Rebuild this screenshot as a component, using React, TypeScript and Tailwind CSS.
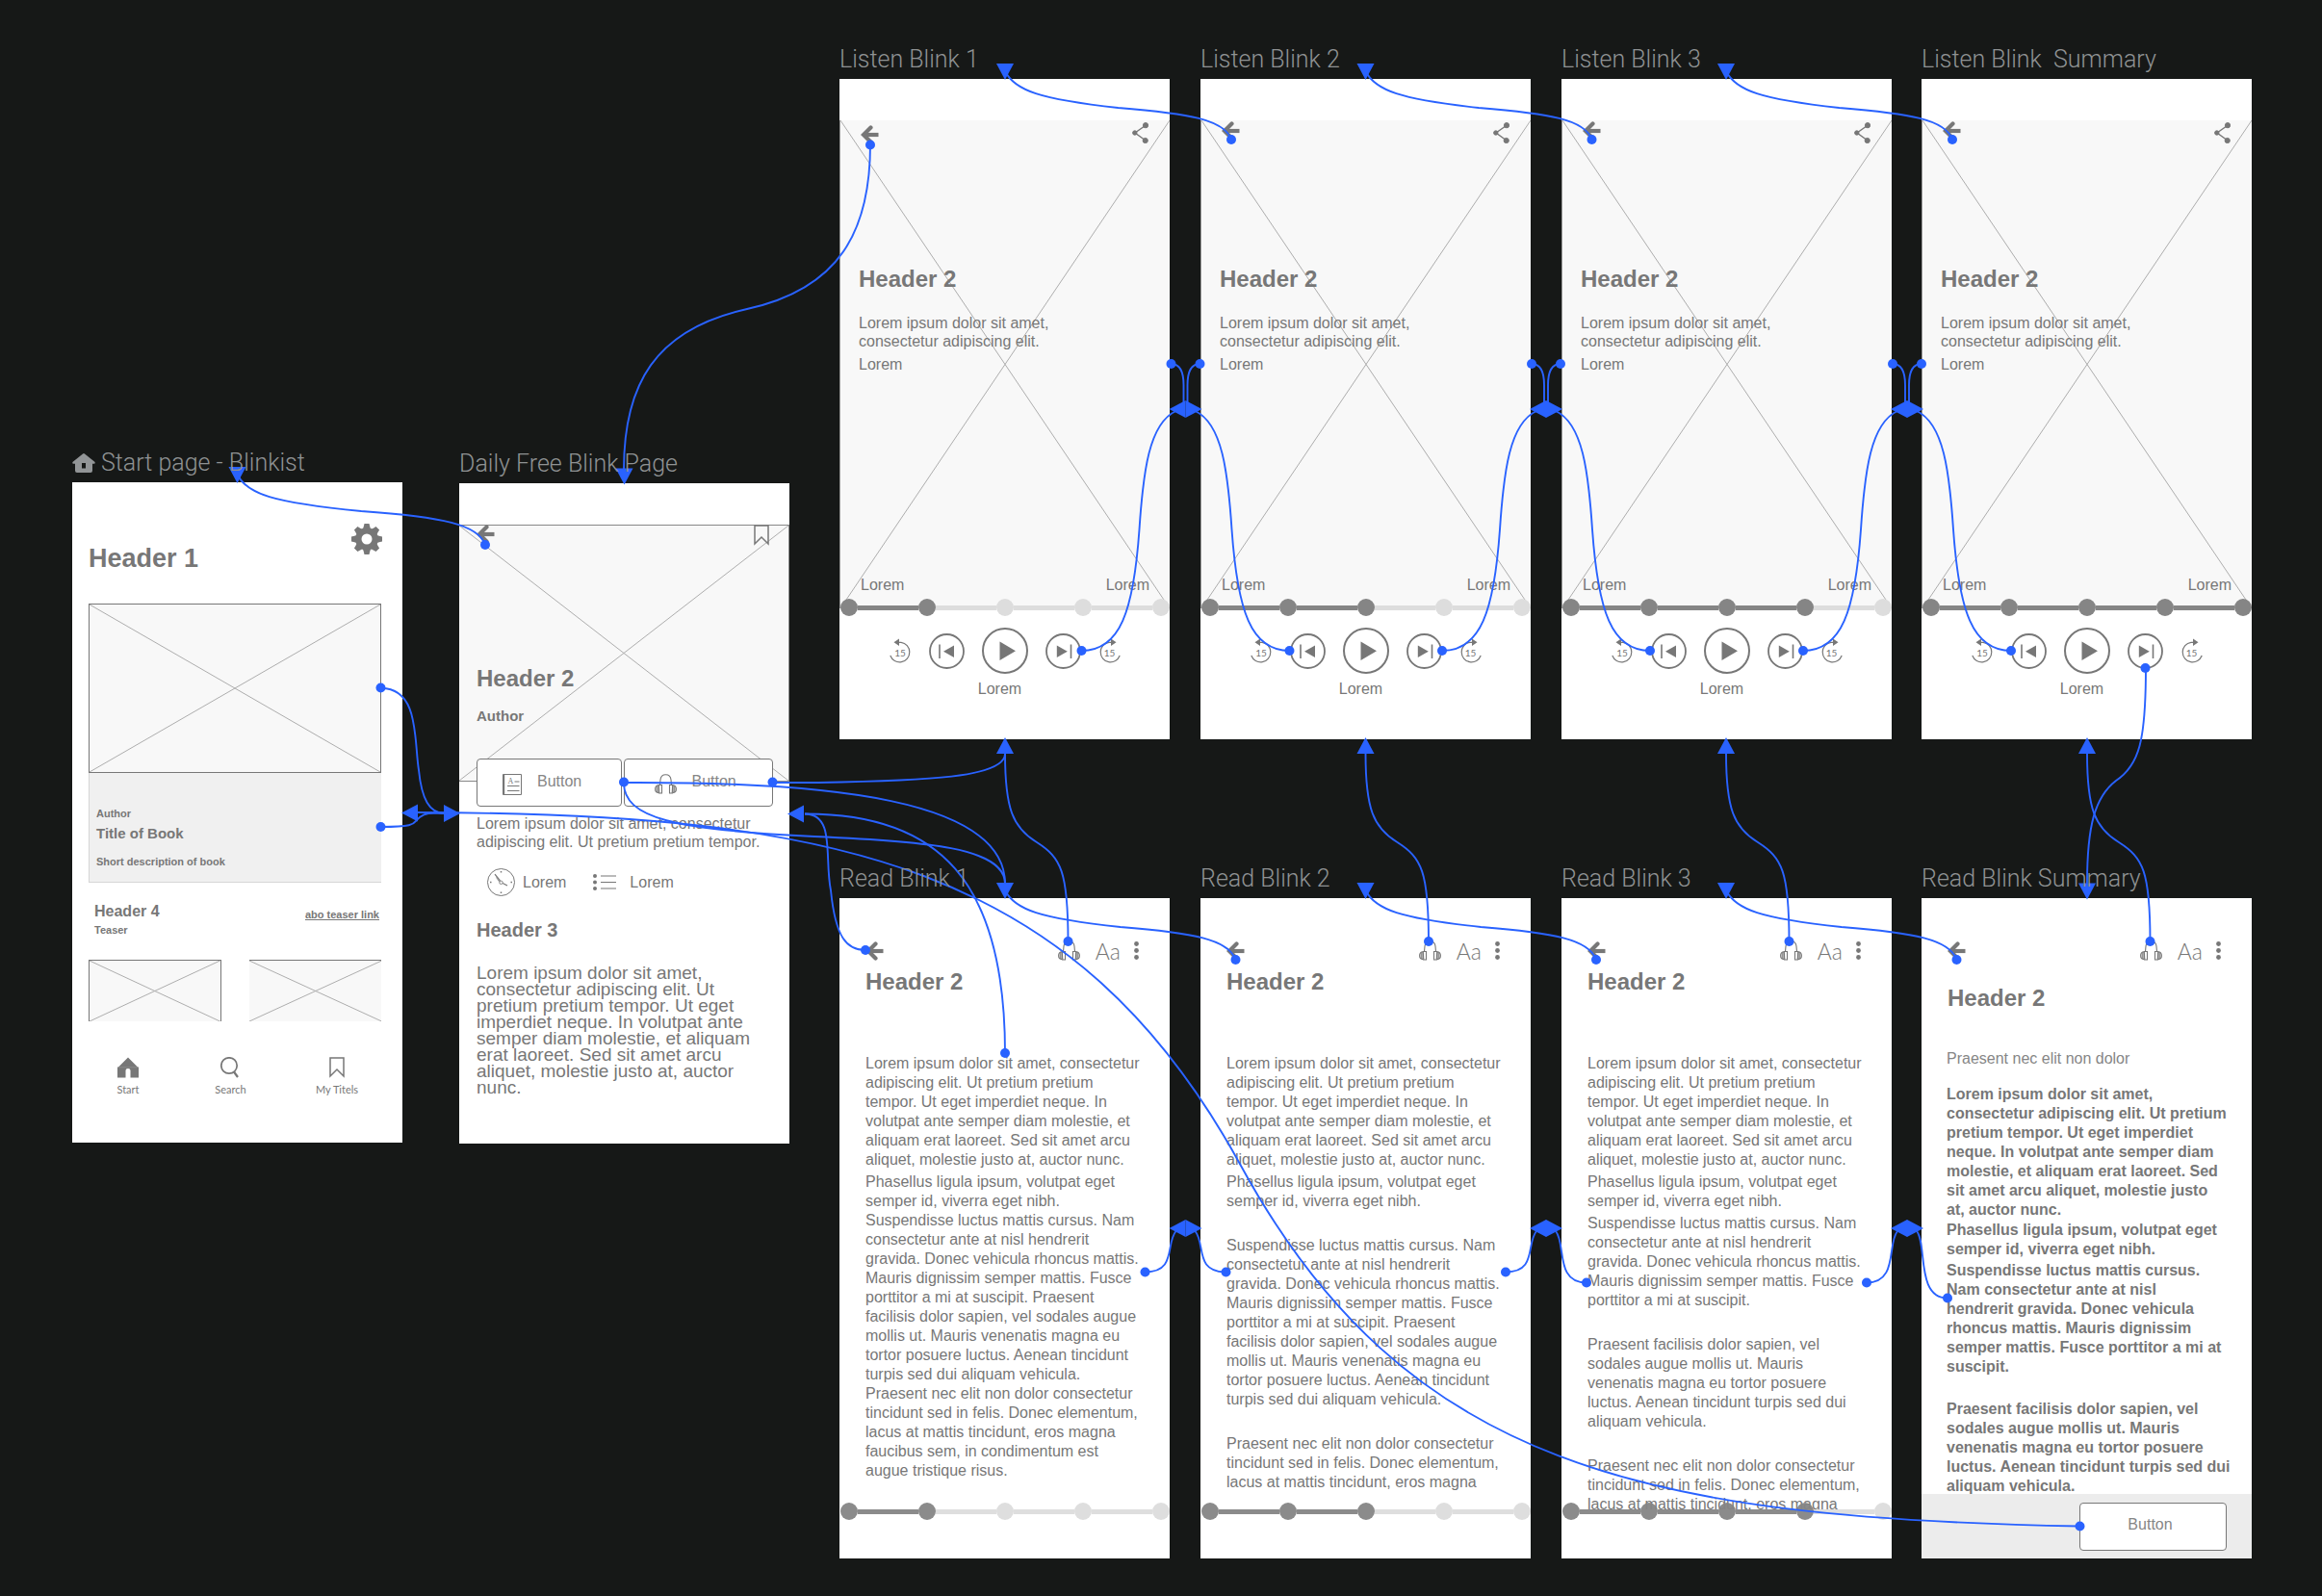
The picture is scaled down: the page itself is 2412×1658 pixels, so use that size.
import React from "react";

/* ---------- shared text ---------- */

const LOREM = `Lorem ipsum dolor sit amet, consectetur
adipiscing elit. Ut pretium pretium
tempor. Ut eget imperdiet neque. In
volutpat ante semper diam molestie, et
aliquam erat laoreet. Sed sit amet arcu
aliquet, molestie justo at, auctor nunc.`;

const PHASELLUS = `Phasellus ligula ipsum, volutpat eget
semper id, viverra eget nibh.`;

const SUSPENDISSE_LONG = `Suspendisse luctus mattis cursus. Nam
consectetur ante at nisl hendrerit
gravida. Donec vehicula rhoncus mattis.
Mauris dignissim semper mattis. Fusce
porttitor a mi at suscipit. Praesent
facilisis dolor sapien, vel sodales augue
mollis ut. Mauris venenatis magna eu
tortor posuere luctus. Aenean tincidunt
turpis sed dui aliquam vehicula.`;

const SUSPENDISSE_SHORT = `Suspendisse luctus mattis cursus. Nam
consectetur ante at nisl hendrerit
gravida. Donec vehicula rhoncus mattis.
Mauris dignissim semper mattis. Fusce
porttitor a mi at suscipit.`;

const FACILISIS = `Praesent facilisis dolor sapien, vel
sodales augue mollis ut. Mauris
venenatis magna eu tortor posuere
luctus. Aenean tincidunt turpis sed dui
aliquam vehicula.`;

const PRAESENT = `Praesent nec elit non dolor consectetur
tincidunt sed in felis. Donec elementum,
lacus at mattis tincidunt, eros magna`;

const PRAESENT_FULL = `${PRAESENT}
faucibus sem, in condimentum est
augue tristique risus.`;

/* ---------- icons ---------- */

function HomeBadge() {
  return (
    <svg viewBox="0 0 24 20" className="h-5 w-6 shrink-0" fill="#929597" aria-hidden="true">
      <path
        fillRule="evenodd"
        d="M11 .5Q12 -.3 13 .5L23.3 8.8Q24.6 10.6 22.6 10.8H21V18Q21 20 19 20H5Q3 20 3 18V10.8H1.4Q-.6 10.6 .7 8.800ZM10 10V15.500H14V10Z"
      />
    </svg>
  );
}

function Gear() {
  return (
    <svg viewBox="0 0 32 32" className="size-8" fill="#777" aria-hidden="true">
      {[0, 45, 90, 135].map((a) => (
        <path
          key={a}
          transform={`rotate(${a} 16 16)`}
          d="M13.500 0H18.500Q19.300 3.500 20 5.500V26.500Q19.300 28.500 18.500 32H13.500Q12.700 28.500 12 26.500V5.500Q12.700 3.500 13.500 0Z"
        />
      ))}
      <circle cx="16" cy="16" r="11.8" />
      <circle cx="16" cy="16" r="5.500" fill="#fff" />
    </svg>
  );
}

function NavHome() {
  return (
    <svg viewBox="0 0 22 22" className="size-[22px]" fill="#777" aria-hidden="true">
      <path d="M11 .5L21 10.500H22V21.500H13.500V14Q13.500 12 11 12T8.500 14V21.500H0V10.500H1Z" />
      <path d="M1 10.800H21" stroke="#999" strokeWidth=".6" />
    </svg>
  );
}

function NavSearch() {
  return (
    <svg viewBox="0 0 22 22" className="size-[22px]" fill="none" stroke="#777" aria-hidden="true">
      <circle cx="9" cy="9" r="8.200" strokeWidth="1.700" />
      <path d="M14 15.500L18 21" strokeWidth="2.200" />
    </svg>
  );
}

function Bookmark() {
  return (
    <svg viewBox="0 0 16 22" className="h-[22px] w-4" fill="none" stroke="#777" strokeWidth="1.500" aria-hidden="true">
      <path d="M1 1H15V20L8 13L1 20Z" />
    </svg>
  );
}

function ArrowLeft() {
  return (
    <svg viewBox="0 0 19 20" className="h-5 w-[19px]" fill="none" stroke="#777" strokeWidth="4.200" aria-hidden="true">
      <path d="M10.500 2.500L3 10L10.500 17.500" strokeLinecap="round" strokeLinejoin="miter" />
      <path d="M3 10H18.500" />
    </svg>
  );
}

function Share() {
  return (
    <svg viewBox="0 0 17 22" className="h-[22px] w-[17px]" fill="#777" stroke="#777" aria-hidden="true">
      <path d="M14 3.200L3 11L14 19" fill="none" strokeWidth="1.400" />
      <circle cx="14" cy="3.200" r="2.600" />
      <circle cx="2.800" cy="11" r="2.200" />
      <circle cx="13.700" cy="19" r="2.600" />
    </svg>
  );
}

function Headphones() {
  return (
    <svg viewBox="0 0 23 21" className="h-[21px] w-[23px]" fill="none" stroke="#777" strokeWidth="1.100" aria-hidden="true">
      <path d="M5.500 11.500L6 6Q6.500 .8 11.500 .8T17 6L17.500 11.500" />
      <path d="M4.300 11.800Q.6 12 .6 15.800T4.300 19.600Z" fill="#ccc" />
      <path d="M18.700 11.800Q22.400 12 22.400 15.800T18.700 19.600Z" fill="#ccc" />
      <path d="M4.300 11.500H7.500V20H4.800ZM18.700 11.500H15.500V20H18.200Z" fill="#fff" />
      <path d="M2.700 12.500V19M20.300 12.500V19" strokeWidth=".8" />
    </svg>
  );
}

function Article() {
  return (
    <svg viewBox="0 0 20 22" className="h-[22px] w-5" fill="none" stroke="#777" aria-hidden="true">
      <path d="M.5 .5H19.500V21.500H.5Z" />
      <path d="M1.500 0V22" strokeWidth="1.400" />
      <path d="M12.500 8H17.500M5 12.500H17.500M5 17.500H17.500" strokeWidth="1.200" />
      <text x="5.500" y="9.500" fontSize="8" fill="#777" stroke="none" fontFamily="Liberation Serif, serif">
        A
      </text>
    </svg>
  );
}

function Clock() {
  return (
    <svg viewBox="0 0 29 29" className="size-[29px]" fill="none" stroke="#777" aria-hidden="true">
      <circle cx="14.500" cy="14.500" r="14" />
      <path d="M14.500 3V4.500M14.500 24.500V26M3 14.500H4.500M24.500 14.500H26" strokeWidth="1.500" />
      <path d="M13.500 13L8 6.200M16.200 15.500L21 18" strokeWidth="1.200" />
      <path d="M12.800 14.200L9.500 9.500" strokeWidth=".8" />
      <circle cx="14.500" cy="14.800" r="1.700" strokeWidth=".9" />
    </svg>
  );
}

function ListIcon() {
  return (
    <svg viewBox="0 0 24 17" className="h-[17px] w-6" fill="#777" stroke="#777" aria-hidden="true">
      <g stroke="none">
        <circle cx="2" cy="2" r="2" />
        <circle cx="2" cy="8.500" r="2" />
        <circle cx="2" cy="15" r="2" />
      </g>
      <path d="M8 2H24M8 8.500H24M8 15H24" strokeWidth="1.200" />
    </svg>
  );
}

function Skip15({ forward = false }: { forward?: boolean }) {
  return (
    <svg viewBox="-1 0 24 26" className="h-[26px] w-6" fill="none" stroke="#777" aria-hidden="true">
      <g transform={forward ? "translate(22 0) scale(-1 1)" : undefined}>
        <path d="M6 4.300H12A10.300 10.300 0 1 1 .8 18" strokeWidth="1.200" />
        <path d="M10 .5L4.500 4.300L10 8Z" fill="#777" stroke="none" />
      </g>
      <text
        x={forward ? 10.5 : 11}
        y="18.500"
        fontSize="10"
        textAnchor="middle"
        fill="#777"
        stroke="none"
        fontFamily="Lato, sans-serif"
      >
        15
      </text>
    </svg>
  );
}

function PrevIcon() {
  return (
    <svg viewBox="0 0 37 37" className="size-[37px]" fill="none" stroke="#777" aria-hidden="true">
      <circle cx="18.500" cy="18.500" r="17.500" strokeWidth="1.800" />
      <path d="M11 11.500V26" strokeWidth="1.600" />
      <path d="M26 12.500V25L15 18.700Z" fill="#777" stroke="none" />
    </svg>
  );
}

function NextIcon() {
  return (
    <svg viewBox="0 0 37 37" className="size-[37px]" fill="none" stroke="#777" aria-hidden="true">
      <circle cx="18.500" cy="18.500" r="17.500" strokeWidth="1.800" />
      <path d="M26.500 11.500V26" strokeWidth="1.600" />
      <path d="M11.800 12.500V25L22.800 18.700Z" fill="#777" stroke="none" />
    </svg>
  );
}

function PlayIcon() {
  return (
    <svg viewBox="0 0 48 48" className="size-12" fill="none" stroke="#777" aria-hidden="true">
      <circle cx="24" cy="24" r="23" strokeWidth="2" />
      <path d="M18.500 14.500V34L35 24.200Z" fill="#777" stroke="none" />
    </svg>
  );
}

function Dots() {
  return (
    <svg viewBox="0 0 5 19" className="h-[19px] w-[5px]" fill="#777" aria-hidden="true">
      <circle cx="2.500" cy="2.500" r="2.400" />
      <circle cx="2.500" cy="9.500" r="2.400" />
      <circle cx="2.500" cy="16.500" r="2.400" />
    </svg>
  );
}

/* ---------- building blocks ---------- */

function Placeholder({ className, children }: { className: string; children?: React.ReactNode }) {
  return (
    <div className={`relative bg-[#f8f8f8] ${className}`}>
      <svg className="absolute inset-0 size-full" viewBox="0 0 100 100" preserveAspectRatio="none" aria-hidden="true">
        <path d="M0 0L100 100M100 0L0 100" stroke="#adadad" fill="none" vectorEffect="non-scaling-stroke" />
      </svg>
      {children}
    </div>
  );
}

function Artboard({
  title,
  place,
  home = false,
  children,
}: {
  title: string;
  place: string;
  home?: boolean;
  children: React.ReactNode;
}) {
  return (
    <section className={`absolute w-[343px] ${place}`}>
      <h2 className="relative z-20 mb-1 flex h-8 items-center gap-1.5 font-[Roboto,sans-serif] text-[25px] font-light whitespace-pre text-[#8f9293]">
        {home && <HomeBadge />}
        {title}
      </h2>
      <div className="relative min-h-[686px] overflow-hidden bg-white text-base text-[#777]">{children}</div>
    </section>
  );
}

function Progress({ filled }: { filled: number }) {
  return (
    <ol className="relative flex h-[18px] items-center justify-between pl-px" aria-label={`Step ${filled} of 5`}>
      {[1, 2, 3, 4, 5].map((n) => (
        <React.Fragment key={n}>
          {n > 1 && <li aria-hidden="true" className={`h-[5px] grow ${n <= filled ? "bg-[#858585]" : "bg-[#ddd]"}`} />}
          <li className={`size-[18px] rounded-full ${n <= filled ? "bg-[#858585]" : "bg-[#ddd]"}`} />
        </React.Fragment>
      ))}
    </ol>
  );
}

/* ---------- screens ---------- */

function StartScreen() {
  return (
    <>
      <header className="flex items-start justify-between pt-[43px] pr-[21px] pl-[17px]">
        <h1 className="mt-5 text-[27px] leading-8 font-bold">Header 1</h1>
        <button type="button" aria-label="Settings">
          <Gear />
        </button>
      </header>
      <main className="mt-[31px] pr-[22px] pl-[17px]">
        <Placeholder className="h-[176px] border border-[#777]" />
        <div className="border-b border-l border-[#d6d6d6] bg-[#f0f0f0] pt-[34px] pb-[13px] pl-[7px] font-bold">
          <p className="text-[11px] leading-4">Author</p>
          <h3 className="mt-[3px] text-[15px] leading-5">Title of Book</h3>
          <p className="mt-[11px] text-[11px] leading-4">Short description of book</p>
        </div>
        <div className="mt-5 flex justify-between pr-0.5 pl-1.5 font-bold">
          <div>
            <h4 className="leading-5">Header 4</h4>
            <p className="mt-px text-[11px] leading-4">Teaser</p>
          </div>
          <a href="#teaser" className="mt-[5px] text-[11px] leading-4 underline">
            abo teaser link
          </a>
        </div>
        <div className="mt-[23px] grid grid-cols-2 gap-[29px]">
          <Placeholder className="h-16 border-x border-t border-[#777]" />
          <Placeholder className="h-16 border-t border-[#777]" />
        </div>
      </main>
      <nav className="mt-[37px] grid grid-cols-[106px_107px_1fr] pr-[11px] pl-[5px] font-[Lato,sans-serif] text-[11px] leading-4">
        <a href="#start" className="flex flex-col items-center gap-1">
          <NavHome />
          Start
        </a>
        <a href="#search" className="flex flex-col items-center gap-1">
          <NavSearch />
          Search
        </a>
        <a href="#titles" className="flex flex-col items-center gap-1">
          <Bookmark />
          My Titels
        </a>
      </nav>
    </>
  );
}

function DailyScreen() {
  return (
    <div className="pt-[43px]">
      <Placeholder className="h-[267px] border-y border-r border-[#888]">
        <div className="relative -mt-px flex items-start justify-between pr-5 pl-[18px]">
          <button type="button" aria-label="Back">
            <ArrowLeft />
          </button>
          <button type="button" aria-label="Bookmark">
            <Bookmark />
          </button>
        </div>
        <div className="relative mt-[124px] pl-[18px]">
          <h1 className="text-2xl leading-7 font-bold">Header 2</h1>
          <p className="mt-[15px] text-[15px] leading-5 font-bold">Author</p>
        </div>
      </Placeholder>
      <div className="relative -mt-6 flex gap-0.5 pr-[17px] pl-[18px]">
        <button
          type="button"
          className="flex h-[50px] flex-1 items-start gap-4 rounded border border-[#777] bg-white pt-3 pl-[26px] leading-[22px] text-[#868686]"
        >
          <span className="pt-[3px]">
            <Article />
          </span>
          Button
        </button>
        <button
          type="button"
          className="flex h-[50px] flex-1 items-start gap-4 rounded border border-[#777] bg-white pt-3 pl-[31px] leading-[22px] text-[#868686]"
        >
          <span className="pt-[3px]">
            <Headphones />
          </span>
          Button
        </button>
      </div>
      <p className="mt-2 pl-[18px] leading-[19px] whitespace-pre-line">
        {"Lorem ipsum dolor sit amet, consectetur\nadipiscing elit. Ut pretium pretium tempor."}
      </p>
      <div className="mt-[18px] flex items-center pl-[29px] leading-5">
        <Clock />
        <span className="ml-2">Lorem</span>
        <span className="ml-7">
          <ListIcon />
        </span>
        <span className="ml-3.5">Lorem</span>
      </div>
      <h3 className="mt-[23px] pl-[18px] text-xl leading-6 font-bold">Header 3</h3>
      <p className="mt-6 pl-[18px] text-[19px] leading-[17px] whitespace-pre-line">
        {`Lorem ipsum dolor sit amet,
consectetur adipiscing elit. Ut
pretium pretium tempor. Ut eget
imperdiet neque. In volutpat ante
semper diam molestie, et aliquam
erat laoreet. Sed sit amet arcu
aliquet, molestie justo at, auctor
nunc.`}
      </p>
    </div>
  );
}

function ListenScreen({ filled, first = false }: { filled: number; first?: boolean }) {
  return (
    <div className="pt-[43px]">
      <Placeholder className="h-[507px] border-l border-[#999]">
        <div className="relative flex h-[151px] items-start justify-between pt-0.5 pr-[22px] pl-[21px]">
          <button type="button" aria-label="Back" className={first ? "pt-[3px]" : "-mt-px"}>
            <ArrowLeft />
          </button>
          <button type="button" aria-label="Share">
            <Share />
          </button>
        </div>
        <div className="relative pl-[19px]">
          <h1 className="text-2xl leading-7 font-bold">Header 2</h1>
          <p className="mt-[22px] leading-[19px] whitespace-pre-line">
            {"Lorem ipsum dolor sit amet,\nconsectetur adipiscing elit."}
          </p>
          <p className="mt-[5px] leading-5">Lorem</p>
        </div>
        <div className="absolute inset-x-0 bottom-3.5 flex justify-between px-[21px] leading-5">
          <span>Lorem</span>
          <span>Lorem</span>
        </div>
      </Placeholder>
      <div className="relative -mt-2.5">
        <Progress filled={filled} />
      </div>
      <div className="mt-3 flex items-center justify-center gap-[18px]">
        <button type="button" aria-label="Back 15 seconds">
          <Skip15 />
        </button>
        <button type="button" aria-label="Previous">
          <PrevIcon />
        </button>
        <button type="button" aria-label="Play">
          <PlayIcon />
        </button>
        <button type="button" aria-label="Next">
          <NextIcon />
        </button>
        <button type="button" aria-label="Forward 15 seconds">
          <Skip15 forward />
        </button>
      </div>
      <p className="mt-1.5 pr-2.5 text-center leading-5">Lorem</p>
    </div>
  );
}

function ReadHeader() {
  return (
    <header className="flex h-[21px] items-center pr-8 pl-[27px]">
      <button type="button" aria-label="Back" className="mr-auto">
        <ArrowLeft />
      </button>
      <button type="button" aria-label="Listen">
        <Headphones />
      </button>
      <button
        type="button"
        aria-label="Text size"
        className="ml-4 font-[Lato,sans-serif] text-[23px] leading-6 font-light"
      >
        Aa
      </button>
      <button type="button" aria-label="More" className="ml-3.5">
        <Dots />
      </button>
    </header>
  );
}

function ReadScreen({ filled, blocks }: { filled: number; blocks: { text: string; gap: string }[] }) {
  return (
    <div className="pt-11">
      <ReadHeader />
      <h1 className="mt-2 pl-[27px] text-2xl leading-7 font-bold">Header 2</h1>
      <div className="mt-[61px] pl-[27px] leading-5 whitespace-pre-line">
        {blocks.map((b) => (
          <p key={b.text} className={b.gap}>
            {b.text}
          </p>
        ))}
      </div>
      <div className="absolute inset-x-0 bottom-10 opacity-95">
        <Progress filled={filled} />
      </div>
    </div>
  );
}

function SummaryScreen() {
  return (
    <div className="pt-11">
      <ReadHeader />
      <h1 className="mt-[25px] pl-[27px] text-2xl leading-7 font-bold">Header 2</h1>
      <div className="mt-[39px] pl-[26px] leading-5 whitespace-pre-line">
        <p className="text-[#868686]">Praesent nec elit non dolor</p>
        <div className="mt-[17px] font-bold">
          <p>{`Lorem ipsum dolor sit amet,
consectetur adipiscing elit. Ut pretium
pretium tempor. Ut eget imperdiet
neque. In volutpat ante semper diam
molestie, et aliquam erat laoreet. Sed
sit amet arcu aliquet, molestie justo
at, auctor nunc.`}</p>
          <p className="mt-px">{PHASELLUS}</p>
          <p className="mt-0.5">{`Suspendisse luctus mattis cursus.
Nam consectetur ante at nisl
hendrerit gravida. Donec vehicula
rhoncus mattis. Mauris dignissim
semper mattis. Fusce porttitor a mi at
suscipit.`}</p>
          <p className="mt-6">{FACILISIS}</p>
        </div>
      </div>
      <footer className="absolute inset-x-0 bottom-0 flex justify-end bg-[#ececec] pt-[9px] pr-[26px] pb-2">
        <button
          type="button"
          className="h-[50px] w-[153px] rounded border border-[#777] bg-white pr-1.5 pb-1 leading-5 text-[#868686]"
        >
          Button
        </button>
      </footer>
    </div>
  );
}

/* ---------- prototype connectors ---------- */

/* Tip coordinates and direction of every arrow head. */
function Head({ x, y, dir }: { x: number; y: number; dir: "up" | "down" | "left" | "right" }) {
  const angle = { down: 0, left: 90, up: 180, right: 270 }[dir];
  return <path d="M0 0L-9 -17H9Z" transform={`translate(${x} ${y}) rotate(${angle})`} fill="#2962ff" stroke="none" />;
}

function Knob({ x, y }: { x: number; y: number }) {
  return <circle cx={x} cy={y} r="5" fill="#2962ff" stroke="none" />;
}

/* "Back" link: from the arrow on top of a board to a back button further right. */
function BackLink({ x, y, tx, ty }: { x: number; y: number; tx: number; ty: number }) {
  return (
    <>
      <path
        d={`M${x} ${y - 9}C${x + 10} ${y + 11} ${x + 36} ${y + 20} ${(x + tx) / 2} ${y + 29}C${tx - 44} ${y + 35} ${tx - 7} ${ty - 21} ${tx} ${ty}`}
      />
      <Head x={x} y={y} dir="down" />
      <Knob x={tx} y={ty} />
    </>
  );
}

/* Links between two neighbouring player boards; x is the middle of the gutter. */
function PlayerLink({ x }: { x: number }) {
  return (
    <g transform={`translate(${x} 0)`}>
      <path d="M-15 378C-5 378 -2 388 -2 400V418M15 378C5 378 2 388 2 400V418" />
      <path d="M-10 427C-38 440 -44 490 -48 550C-54 635 -68 676 -108 676" />
      <path d="M10 427C38 440 44 490 48 550C54 635 68 676 108 676" />
      <Head x={-17} y={425} dir="left" />
      <Head x={17} y={425} dir="right" />
      <Knob x={-15} y={378} />
      <Knob x={15} y={378} />
      <Knob x={-108} y={676} />
      <Knob x={108} y={676} />
    </g>
  );
}

/* Swipe links between two neighbouring reader boards. */
function ReaderLink({ x, left, right }: { x: number; left: number; right: number }) {
  return (
    <>
      <path d={`M${x - 42} ${left}C${x - 9} ${left} ${x - 21} 1292 ${x - 10} 1279`} />
      <path d={`M${x + 42} ${right}C${x + 9} ${right} ${x + 21} 1292 ${x + 10} 1279`} />
      <Head x={x - 17} y={1276} dir="left" />
      <Head x={x + 17} y={1276} dir="right" />
      <Knob x={x - 42} y={left} />
      <Knob x={x + 42} y={right} />
    </>
  );
}

/* Headphones of a reader board up to the player board above it. */
function ListenLink({ x }: { x: number }) {
  return (
    <>
      <path d={`M${x} 783C${x} 840 ${x + 8} 860 ${x + 33} 875C${x + 58} 891 ${x + 65.5} 905 ${x + 65.5} 978`} />
      <Head x={x} y={766} dir="up" />
      <Knob x={x + 65.5} y={978} />
    </>
  );
}

function Connectors() {
  return (
    <svg
      className="pointer-events-none absolute top-0 left-0 z-10 h-[1658px] w-[2412px]"
      viewBox="0 0 2412 1658"
      fill="none"
      stroke="#2962ff"
      strokeWidth="1.900"
      aria-hidden="true"
    >
      <BackLink x={246.5} y={502} tx={504} ty={566} />
      {[1044, 1418.5, 1793].map((x) => (
        <g key={x}>
          <BackLink x={x} y={83} tx={x + 235} ty={145} />
          <BackLink x={x} y={934} tx={x + 239.5} ty={997} />
        </g>
      ))}
      {[1231.5, 1606, 1981].map((x) => (
        <PlayerLink key={x} x={x} />
      ))}
      <ReaderLink x={1231.5} left={1321.5} right={1321.5} />
      <ReaderLink x={1606} left={1321.5} right={1332.5} />
      <ReaderLink x={1981} left={1332.5} right={1348.5} />
      {[1044, 1418.5, 1793, 2168].map((x) => (
        <ListenLink key={x} x={x} />
      ))}

      {/* player back button to the daily page */}
      <path d="M904 150C904 240 872 300 776 321C680 342 648 400 648 488" />
      <Knob x={904} y={150.5} />
      <Head x={648.5} y={503.5} dir="down" />

      {/* teaser card to the daily page */}
      <path d="M396 715C436 715 430 770 435 800C438 830 446 845 462 845" />
      <path d="M396 859C436 859 428 855 436 849S450 845 462 845" />
      <Knob x={395.5} y={714.5} />
      <Knob x={395.5} y={859} />
      <Head x={478} y={845} dir="right" />

      {/* summary button back to the start page */}
      <path d="M434 844C870 845 1118 898 1289 1211C1460 1524 1708 1577 2160 1585.500" />
      <Head x={417} y={844.5} dir="left" />
      <Knob x={2160.5} y={1585.5} />

      {/* read and listen buttons of the daily page */}
      <path d="M803 813H850C960 811 1044 808 1044 783" />
      <path d="M648 813C860 812 1044 830 1044 918" />
      <path d="M648 813C648 850 700 862 846 869C960 874 1044 880 1044 918" />
      <Knob x={648} y={812.5} />
      <Knob x={802.5} y={812.5} />

      {/* reader board to the daily page */}
      <path d="M836 845.500C975 845 1044 915 1044 1094" />
      <path d="M836 845.500C868 846 856 890 863 925C868 975 880 987 899 987" />
      <Head x={818} y={845.5} dir="left" />
      <Knob x={1044} y={1094} />
      <Knob x={899} y={987} />

      {/* last player step to the summary */}
      <path d="M2229 694C2229 770 2222 795 2198 811C2176 828 2168 858 2168 918" />
      <Knob x={2228.5} y={694} />
      <Head x={2168} y={934.5} dir="down" />
    </svg>
  );
}

/* ---------- canvas ---------- */

export default function App() {
  return (
    <div className="relative min-h-[1658px] w-full overflow-hidden bg-[#161817] font-['Liberation_Sans',Arial,sans-serif]">
      <Artboard title="Start page - Blinkist" place="left-[75px] top-[465px]" home>
        <StartScreen />
      </Artboard>
      <Artboard title="Daily Free Blink Page" place="left-[477px] top-[466px]">
        <DailyScreen />
      </Artboard>

      <Artboard title="Listen Blink 1" place="left-[872px] top-[46px]">
        <ListenScreen filled={2} first />
      </Artboard>
      <Artboard title="Listen Blink 2" place="left-[1247px] top-[46px]">
        <ListenScreen filled={3} />
      </Artboard>
      <Artboard title="Listen Blink 3" place="left-[1622px] top-[46px]">
        <ListenScreen filled={4} />
      </Artboard>
      <Artboard title="Listen Blink  Summary" place="left-[1996px] top-[46px]">
        <ListenScreen filled={5} />
      </Artboard>

      <Artboard title="Read Blink 1" place="left-[872px] top-[897px]">
        <ReadScreen
          filled={2}
          blocks={[
            { text: LOREM, gap: "mt-0" },
            { text: PHASELLUS, gap: "mt-[3px]" },
            { text: SUSPENDISSE_LONG, gap: "mt-0" },
            { text: PRAESENT_FULL, gap: "mt-0" },
          ]}
        />
      </Artboard>
      <Artboard title="Read Blink 2" place="left-[1247px] top-[897px]">
        <ReadScreen
          filled={3}
          blocks={[
            { text: LOREM, gap: "mt-0" },
            { text: PHASELLUS, gap: "mt-[3px]" },
            { text: SUSPENDISSE_LONG, gap: "mt-[26px]" },
            { text: PRAESENT, gap: "mt-[26px]" },
          ]}
        />
      </Artboard>
      <Artboard title="Read Blink 3" place="left-[1622px] top-[897px]">
        <ReadScreen
          filled={4}
          blocks={[
            { text: LOREM, gap: "mt-0" },
            { text: PHASELLUS, gap: "mt-[3px]" },
            { text: SUSPENDISSE_SHORT, gap: "mt-[3px]" },
            { text: FACILISIS, gap: "mt-[26px]" },
            { text: PRAESENT, gap: "mt-[26px]" },
          ]}
        />
      </Artboard>
      <Artboard title="Read Blink Summary" place="left-[1996px] top-[897px]">
        <SummaryScreen />
      </Artboard>

      <Connectors />
    </div>
  );
}
